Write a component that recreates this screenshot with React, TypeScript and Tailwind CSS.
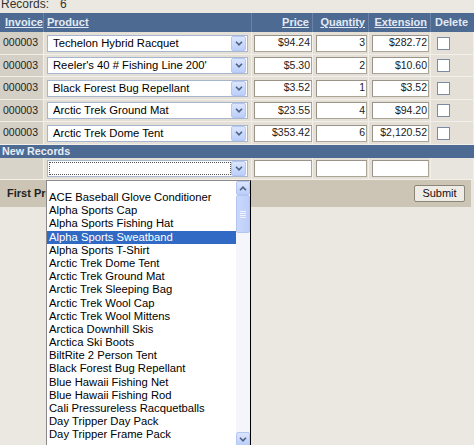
import React from 'react';

interface LineItem {
  product: string;
  price: string;
  qty: string;
  ext: string;
}

const lines: LineItem[] = [
  { product: 'Techelon Hybrid Racquet', price: '$94.24', qty: '3', ext: '$282.72' },
  { product: "Reeler's 40 # Fishing Line 200'", price: '$5.30', qty: '2', ext: '$10.60' },
  { product: 'Black Forest Bug Repellant', price: '$3.52', qty: '1', ext: '$3.52' },
  { product: 'Arctic Trek Ground Mat', price: '$23.55', qty: '4', ext: '$94.20' },
  { product: 'Arctic Trek Dome Tent', price: '$353.42', qty: '6', ext: '$2,120.52' },
];

const rowHeights = ['h-[23px]', 'h-[22px]', 'h-[23px]', 'h-[22px]', 'h-[23px]'];

const options = [
  'ACE Baseball Glove Conditioner',
  'Alpha Sports Cap',
  'Alpha Sports Fishing Hat',
  'Alpha Sports Sweatband',
  'Alpha Sports T-Shirt',
  'Arctic Trek Dome Tent',
  'Arctic Trek Ground Mat',
  'Arctic Trek Sleeping Bag',
  'Arctic Trek Wool Cap',
  'Arctic Trek Wool Mittens',
  'Arctica Downhill Skis',
  'Arctica Ski Boots',
  'BiltRite 2 Person Tent',
  'Black Forest Bug Repellant',
  'Blue Hawaii Fishing Net',
  'Blue Hawaii Fishing Rod',
  'Cali Pressureless Racquetballs',
  'Day Tripper Day Pack',
  'Day Tripper Frame Pack',
];

const cols = 'grid grid-cols-[44px_208px_61px_56px_62px_43px]';

const Chevron: React.FC<{ up?: boolean }> = ({ up }) => (
  <svg width="8" height="5" viewBox="0 0 8 5" className="block">
    <path
      d={up ? 'M1 4.2 L4 1.2 L7 4.2' : 'M1 0.8 L4 3.8 L7 0.8'}
      fill="none"
      stroke="#4d6185"
      strokeWidth="1.6"
    />
  </svg>
);

const ArrowButton: React.FC<{ up?: boolean; className?: string }> = ({ up, className = '' }) => (
  <div
    className={`flex items-center justify-center rounded-[2px] border border-[#b4c6f2] bg-gradient-to-b from-[#dbe5fd] to-[#bccffb] ${className}`}
  >
    <Chevron up={up} />
  </div>
);

const SelectBox: React.FC<{ value: string; focused?: boolean }> = ({ value, focused }) => (
  <div className="flex h-[17px] w-[201px] items-center border border-[#a7b6cf] bg-white p-px">
    <div
      className={`flex h-full flex-1 items-center overflow-hidden whitespace-nowrap pl-[4px] text-[11.25px] text-black ${
        focused ? 'border border-dotted border-[#555]' : ''
      }`}
    >
      {value}
    </div>
    <ArrowButton className="h-[15px] w-[15px]" />
  </div>
);

const TextBox: React.FC<{ value: string; width: string }> = ({ value, width }) => (
  <div
    className={`flex h-[17px] ${width} items-center justify-end border border-[#aba598] border-t-[#9a9488] border-l-[#9a9488] bg-white pr-[1px] text-[10.5px] text-[#222]`}
  >
    {value}
  </div>
);

const cell = 'flex items-center border-r border-b border-[#f3f0ea]';

const App: React.FC = () => {
  return (
    <div className="relative h-[445px] w-[474px] overflow-hidden bg-[#ebe8e2] font-['Liberation_Sans',Arial,sans-serif]">
      <div className="h-[13px] overflow-hidden">
        <div className="mt-[-3px] pl-[1px] text-[12px] leading-[14px] text-[#333]">
          Records:<span className="ml-[11px]">6</span>
        </div>
      </div>

      <div className={`${cols} h-[19px] bg-[#4d6a93] text-[11px] font-bold text-[#e4eaf4]`}>
        <div className="flex items-center border-r border-[#6a83a8] pl-[5px] underline">Invoice</div>
        <div className="flex items-center border-r border-[#6a83a8] pl-[3px] underline">Product</div>
        <div className="flex items-center justify-end border-r border-[#6a83a8] pr-[3px] underline">Price</div>
        <div className="flex items-center justify-end border-r border-[#6a83a8] pr-[3px] underline">Quantity</div>
        <div className="flex items-center justify-end border-r border-[#6a83a8] pr-[3px] underline">Extension</div>
        <div className="flex items-center pl-[4px]">Delete</div>
      </div>

      {lines.map((line, i) => (
        <div key={i} className={`${cols} ${rowHeights[i]}`}>
          <div className={`${cell} bg-[#d5d0c5] pl-[3px] text-[10.5px] text-[#222]`}>000003</div>
          <div className={`${cell} bg-[#e4e0d8] pl-[3px]`}>
            <SelectBox value={line.product} />
          </div>
          <div className={`${cell} bg-[#e4e0d8] pl-[2px]`}>
            <TextBox value={line.price} width="w-[58px]" />
          </div>
          <div className={`${cell} bg-[#e4e0d8] pl-[3px]`}>
            <TextBox value={line.qty} width="w-[51px]" />
          </div>
          <div className={`${cell} bg-[#e4e0d8] pl-[3px]`}>
            <TextBox value={line.ext} width="w-[57px]" />
          </div>
          <div className={`${cell} bg-[#e4e0d8] pl-[6px]`}>
            <div className="h-[13px] w-[13px] border border-[#7b8ba6] bg-white" />
          </div>
        </div>
      ))}

      <div className="h-[13px] bg-[#4d6a93] pl-[2px] text-[10.75px] font-bold leading-[13px] text-[#e8edf6]">
        New Records
      </div>

      <div className={`${cols} h-[22px]`}>
        <div className={`${cell} bg-[#d9d4ca]`} />
        <div className={`${cell} bg-[#e4e0d8] pl-[3px]`}>
          <SelectBox value="" focused />
        </div>
        <div className={`${cell} bg-[#e4e0d8] pl-[2px]`}>
          <TextBox value="" width="w-[58px]" />
        </div>
        <div className={`${cell} bg-[#e4e0d8] pl-[3px]`}>
          <TextBox value="" width="w-[51px]" />
        </div>
        <div className={`${cell} bg-[#e4e0d8] pl-[3px]`}>
          <TextBox value="" width="w-[57px]" />
        </div>
        <div className={`${cell} bg-[#e8e5de]`} />
      </div>

      <div className="flex h-[27px] w-[471px] items-center justify-between bg-[#ccc5b5] pl-[7px] pr-[6px]">
        <span className="text-[11px] font-bold text-[#222]">First Prev</span>
        <button className="h-[17px] w-[51px] rounded-[2px] border border-[#8a8579] bg-[#efece6] text-[11px] leading-[15px] text-[#111]">
          Submit
        </button>
      </div>

      {/* open dropdown of the new-record product select */}
      <div className="absolute left-[46px] top-[180px] flex h-[267px] w-[205px] border border-black border-l-[#8a8a8a] border-t-[#8a8a8a] bg-white">
        <div className="flex-1">
          <div className="h-[10px]" />
          {options.map(opt => (
            <div
              key={opt}
              className={`h-[13.2px] whitespace-nowrap pl-[2px] text-[11.25px] leading-[13.2px] ${
                opt === 'Alpha Sports Sweatband' ? 'bg-[#316ac5] text-white' : 'text-black'
              }`}
            >
              {opt}
            </div>
          ))}
        </div>
        <div className="flex w-[14px] flex-col bg-[#f5f6fb]">
          <ArrowButton up className="h-[14px] w-[14px]" />
          <div className="flex h-[38px] w-[14px] flex-col items-center justify-center gap-[1px] rounded-[2px] border border-[#b4c6f2] bg-gradient-to-r from-[#cad8fc] to-[#bccefa]">
            <div className="h-px w-[6px] bg-[#eef3ff]" />
            <div className="h-px w-[6px] bg-[#eef3ff]" />
            <div className="h-px w-[6px] bg-[#eef3ff]" />
            <div className="h-px w-[6px] bg-[#eef3ff]" />
          </div>
          <div className="flex-1" />
          <ArrowButton className="h-[14px] w-[14px]" />
        </div>
      </div>
    </div>
  );
};

export default App;
